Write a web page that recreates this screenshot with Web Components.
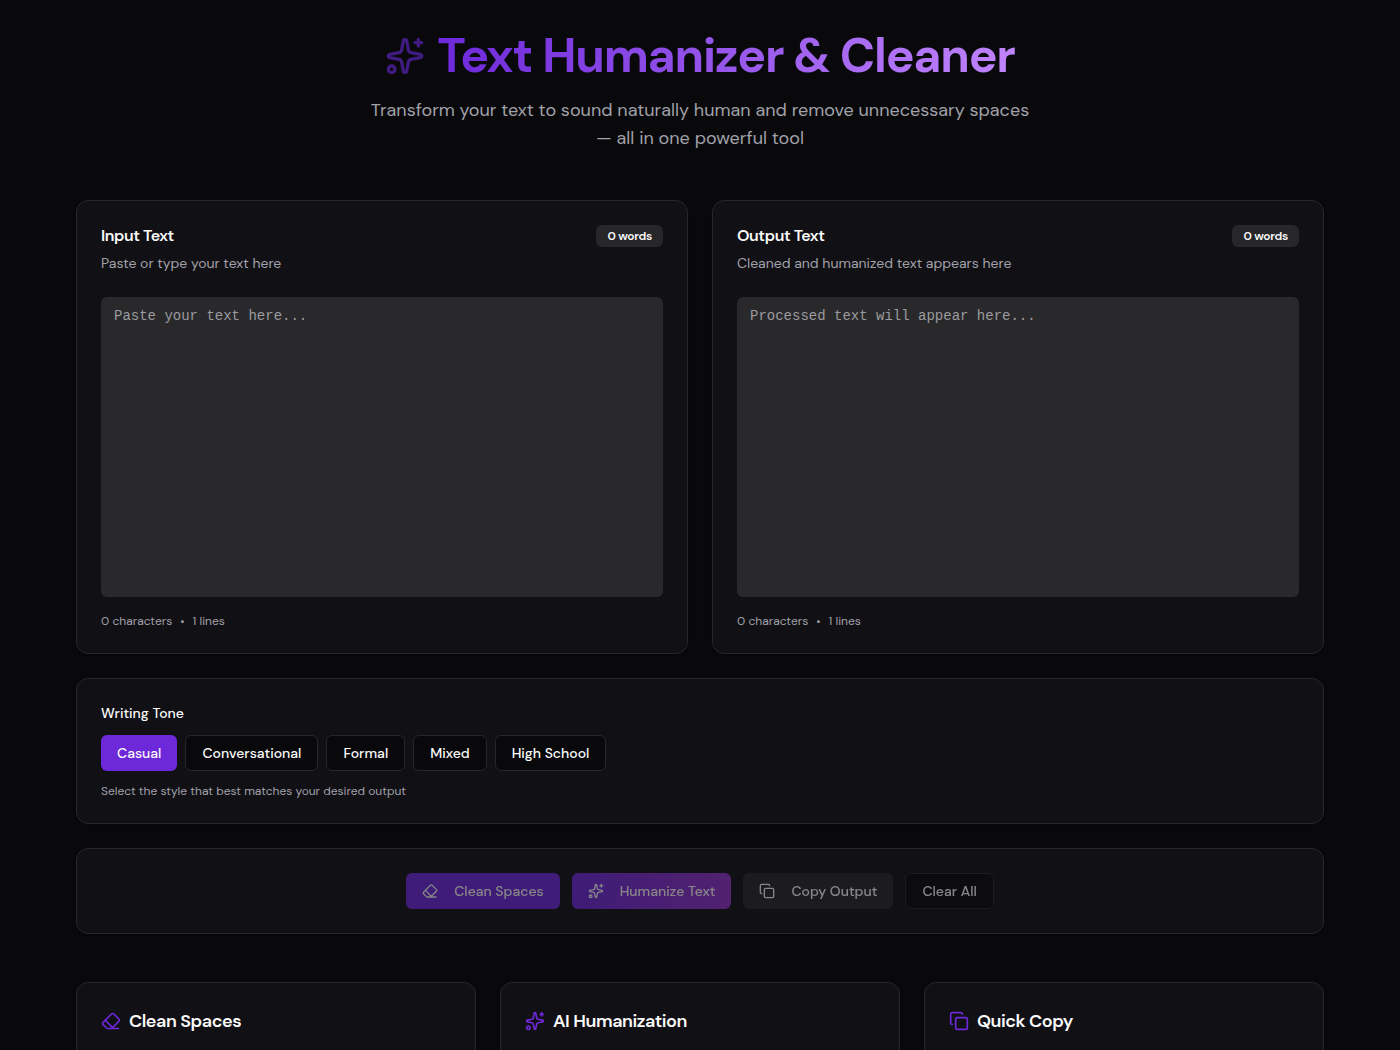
<!DOCTYPE html>
<html lang="en">
<head>
<meta charset="utf-8">
<title>Text Humanizer &amp; Cleaner</title>
<meta name="viewport" content="width=device-width, initial-scale=1">
<style>
    :root {
        --background: #09090b;
        --card: #111015;
        --border: #27272a;
        --field: #29292b;
        --foreground: #fafafa;
        --muted: #a1a1aa;
        --primary: #6d28d9;
        scrollbar-width: none;
    }
    body {
        margin: 0;
        background: var(--background);
        color: var(--foreground);
        font-family: "DM Sans", Inter, sans-serif;
        font-size: 14px;
        line-height: 20px;
    }
</style>
</head>
<body>
<humanizer-app></humanizer-app>

<script>
const ICONS = {
    sparkles: `
        <path d="M11.017 2.814a1 1 0 0 1 1.966 0l1.051 5.558a2 2 0 0 0 1.594 1.594l5.558 1.051a1 1 0 0 1 0 1.966l-5.558 1.051a2 2 0 0 0-1.594 1.594l-1.051 5.558a1 1 0 0 1-1.966 0l-1.051-5.558a2 2 0 0 0-1.594-1.594l-5.558-1.051a1 1 0 0 1 0-1.966l5.558-1.051a2 2 0 0 0 1.594-1.594z"/>
        <path d="M20 2v4"/><path d="M22 4h-4"/><circle cx="4" cy="20" r="2"/>`,
    eraser: `
        <path d="M21 21H8a2 2 0 0 1-1.42-.587l-3.994-3.999a2 2 0 0 1 0-2.828l10-10a2 2 0 0 1 2.829 0l5.999 6a2 2 0 0 1 0 2.828L12.834 21"/>
        <path d="m5.082 11.09 8.828 8.828"/>`,
    copy: `
        <rect width="14" height="14" x="8" y="8" rx="2" ry="2"/>
        <path d="M4 16c-1.1 0-2-.9-2-2V4c0-1.1.9-2 2-2h10c1.1 0 2 .9 2 2"/>`
};

class UiIcon extends HTMLElement {
    constructor() {
        super();
        this.attachShadow({ mode: 'open' });
    }

    connectedCallback() {
        this.shadowRoot.innerHTML = `
            <style>
                :host {
                    display: block;
                    flex: none;
                    width: var(--icon-size, 16px);
                    height: var(--icon-size, 16px);
                }
                svg { display: block; width: 100%; height: 100%; }
            </style>
            <svg viewBox="0 0 24 24" fill="none" stroke="currentColor" stroke-width="2"
                stroke-linecap="round" stroke-linejoin="round" aria-hidden="true">${ICONS[this.getAttribute('name')]}</svg>
        `;
    }
}

class PageHeader extends HTMLElement {
    constructor() {
        super();
        this.attachShadow({ mode: 'open' });
        this.shadowRoot.innerHTML = `
            <style>
                :host { display: block; text-align: center; }
                h1 {
                    display: flex;
                    justify-content: center;
                    align-items: center;
                    gap: 12px;
                    margin: 0 0 16px;
                    font-size: 48px;
                    line-height: 48px;
                    font-weight: 700;
                    letter-spacing: -0.025em;
                }
                ui-icon { --icon-size: 40px; color: #401b80; }
                h1 span {
                    background: linear-gradient(to right, #6d28d9, #c084fc);
                    -webkit-background-clip: text;
                    background-clip: text;
                    color: transparent;
                }
                p {
                    max-width: 672px;
                    margin: 0 auto;
                    font-size: 18px;
                    line-height: 28px;
                    color: var(--muted);
                }
            </style>
            <h1><ui-icon name="sparkles"></ui-icon><span><slot name="title"></slot></span></h1>
            <p><slot></slot></p>
        `;
    }
}

class UiCard extends HTMLElement {
    constructor() {
        super();
        this.attachShadow({ mode: 'open' });
        this.shadowRoot.innerHTML = `
            <style>
                :host {
                    display: block;
                    box-sizing: border-box;
                    min-width: 0;
                    padding: 24px;
                    border: 1px solid var(--border);
                    border-radius: 12px;
                    background: var(--card);
                    box-shadow: 0 1px 3px rgba(0, 0, 0, 0.1);
                }
            </style>
            <slot></slot>
        `;
    }
}

class TextPanel extends HTMLElement {
    constructor() {
        super();
        this.attachShadow({ mode: 'open' });
    }

    connectedCallback() {
        const readonly = this.hasAttribute('readonly') ? 'readonly' : '';
        this.shadowRoot.innerHTML = `
            <style>
                :host { display: block; min-width: 0; }
                .top {
                    display: flex;
                    justify-content: space-between;
                    align-items: center;
                    margin-bottom: 6px;
                }
                label { font-size: 16px; line-height: 16px; font-weight: 600; letter-spacing: -0.025em; }
                .badge {
                    padding: 3px 11px;
                    border-radius: 6px;
                    background: var(--border);
                    font-size: 12px;
                    line-height: 16px;
                    font-weight: 600;
                    letter-spacing: -0.025em;
                }
                p { margin: 0 0 24px; color: var(--muted); }
                textarea {
                    display: block;
                    box-sizing: border-box;
                    width: 100%;
                    height: 300px;
                    padding: 9px 13px;
                    border: 0;
                    border-radius: 6px;
                    background: var(--field);
                    color: var(--foreground);
                    font-family: "Liberation Mono", monospace;
                    font-size: 14px;
                    line-height: 20px;
                    resize: none;
                }
                textarea::placeholder { color: #9b9b9f; opacity: 1; }
                .stats {
                    display: flex;
                    gap: 8px;
                    margin-top: 16px;
                    font-size: 12px;
                    line-height: 16px;
                    color: var(--muted);
                }
            </style>
            <ui-card>
                <div class="top">
                    <label for="text">${this.getAttribute('label')}</label>
                    <span class="badge"></span>
                </div>
                <p><slot></slot></p>
                <textarea id="text" placeholder="${this.getAttribute('placeholder')}" ${readonly}></textarea>
                <div class="stats"><span class="chars"></span><span>•</span><span class="lines"></span></div>
            </ui-card>
        `;
        this.field = this.shadowRoot.querySelector('textarea');
        this.field.addEventListener('input', () => this.count());
        this.count();
    }

    count() {
        const text = this.field.value;
        const words = text.trim() ? text.trim().split(/\s+/).length : 0;
        this.shadowRoot.querySelector('.badge').textContent = `${words} words`;
        this.shadowRoot.querySelector('.chars').textContent = `${text.length} characters`;
        this.shadowRoot.querySelector('.lines').textContent = `${text.split('\n').length} lines`;
    }
}

class UiButton extends HTMLElement {
    constructor() {
        super();
        this.attachShadow({ mode: 'open' });
    }

    connectedCallback() {
        const icon = this.getAttribute('icon');
        this.shadowRoot.innerHTML = `
            <style>
                :host { display: block; }
                button {
                    display: flex;
                    align-items: center;
                    gap: 16px;
                    height: 36px;
                    padding: 0 16px;
                    border: 0;
                    border-radius: 6px;
                    font: inherit;
                    font-weight: 500;
                    white-space: nowrap;
                    color: var(--foreground);
                    background: var(--primary);
                    cursor: pointer;
                }
                button:disabled { opacity: 0.5; cursor: default; }
                :host([variant="outline"]) button {
                    border: 1px solid var(--border);
                    background: var(--background);
                }
                :host([variant="secondary"]) button { background: var(--border); }
                :host([variant="gradient"]) button {
                    background: linear-gradient(to right, #6d28d9, #9333c9);
                }
            </style>
            <button type="button" ${this.hasAttribute('disabled') ? 'disabled' : ''}>
                ${icon ? `<ui-icon name="${icon}"></ui-icon>` : ''}<slot></slot>
            </button>
        `;
    }
}

class TonePicker extends HTMLElement {
    constructor() {
        super();
        this.attachShadow({ mode: 'open' });
        this.shadowRoot.innerHTML = `
            <style>
                :host { display: block; }
                h2 { margin: 0 0 12px; font-size: 14px; line-height: 20px; font-weight: 500; }
                .tones { display: flex; flex-wrap: wrap; gap: 8px; }
                p { margin: 12px 0 0; font-size: 12px; line-height: 16px; color: var(--muted); }
            </style>
            <ui-card>
                <h2 id="tone">Writing Tone</h2>
                <div class="tones" role="group" aria-labelledby="tone">
                    <ui-button>Casual</ui-button>
                    <ui-button variant="outline">Conversational</ui-button>
                    <ui-button variant="outline">Formal</ui-button>
                    <ui-button variant="outline">Mixed</ui-button>
                    <ui-button variant="outline">High School</ui-button>
                </div>
                <p>Select the style that best matches your desired output</p>
            </ui-card>
        `;
        this.shadowRoot.querySelector('.tones').addEventListener('click', (e) => {
            const picked = e.target.closest('ui-button');
            if (!picked) return;
            this.shadowRoot.querySelectorAll('ui-button').forEach(b => b.setAttribute('variant', 'outline'));
            picked.removeAttribute('variant');
        });
    }
}

class FeatureCard extends HTMLElement {
    constructor() {
        super();
        this.attachShadow({ mode: 'open' });
    }

    connectedCallback() {
        this.shadowRoot.innerHTML = `
            <style>
                :host { display: block; min-width: 0; }
                h3 {
                    display: flex;
                    align-items: center;
                    gap: 8px;
                    margin: 0;
                    font-size: 18px;
                    line-height: 28px;
                    font-weight: 600;
                    letter-spacing: -0.025em;
                }
                ui-icon { --icon-size: 20px; color: var(--primary); }
            </style>
            <ui-card>
                <h3><ui-icon name="${this.getAttribute('icon')}"></ui-icon><slot></slot></h3>
            </ui-card>
        `;
    }
}

class HumanizerApp extends HTMLElement {
    constructor() {
        super();
        this.attachShadow({ mode: 'open' });
        this.shadowRoot.innerHTML = `
            <style>
                :host {
                    display: block;
                    box-sizing: border-box;
                    max-width: 1280px;
                    margin: 0 auto;
                    padding: 32px 16px;
                }
                page-header { margin-bottom: 48px; }
                .panels { display: grid; grid-template-columns: repeat(2, 1fr); gap: 24px; }
                tone-picker, .actions { margin-top: 24px; }
                .row { display: flex; flex-wrap: wrap; justify-content: center; gap: 12px; }
                .features {
                    display: grid;
                    grid-template-columns: repeat(3, 1fr);
                    gap: 24px;
                    margin-top: 48px;
                }
                @media (max-width: 768px) {
                    .panels, .features { grid-template-columns: 1fr; }
                }
            </style>
            <page-header>
                <span slot="title">Text Humanizer &amp; Cleaner</span>
                Transform your text to sound naturally human and remove unnecessary spaces — all in one powerful tool
            </page-header>
            <div class="panels">
                <text-panel label="Input Text" placeholder="Paste your text here...">Paste or type your text here</text-panel>
                <text-panel label="Output Text" placeholder="Processed text will appear here..." readonly>Cleaned and humanized text appears here</text-panel>
            </div>
            <tone-picker></tone-picker>
            <ui-card class="actions">
                <div class="row">
                    <ui-button icon="eraser" disabled>Clean Spaces</ui-button>
                    <ui-button icon="sparkles" variant="gradient" disabled>Humanize Text</ui-button>
                    <ui-button icon="copy" variant="secondary" disabled>Copy Output</ui-button>
                    <ui-button variant="outline" disabled>Clear All</ui-button>
                </div>
            </ui-card>
            <div class="features">
                <feature-card icon="eraser">Clean Spaces</feature-card>
                <feature-card icon="sparkles">AI Humanization</feature-card>
                <feature-card icon="copy">Quick Copy</feature-card>
            </div>
        `;
    }
}

customElements.define('ui-icon', UiIcon);
customElements.define('ui-card', UiCard);
customElements.define('ui-button', UiButton);
customElements.define('page-header', PageHeader);
customElements.define('text-panel', TextPanel);
customElements.define('tone-picker', TonePicker);
customElements.define('feature-card', FeatureCard);
customElements.define('humanizer-app', HumanizerApp);
</script>
</body>
</html>
